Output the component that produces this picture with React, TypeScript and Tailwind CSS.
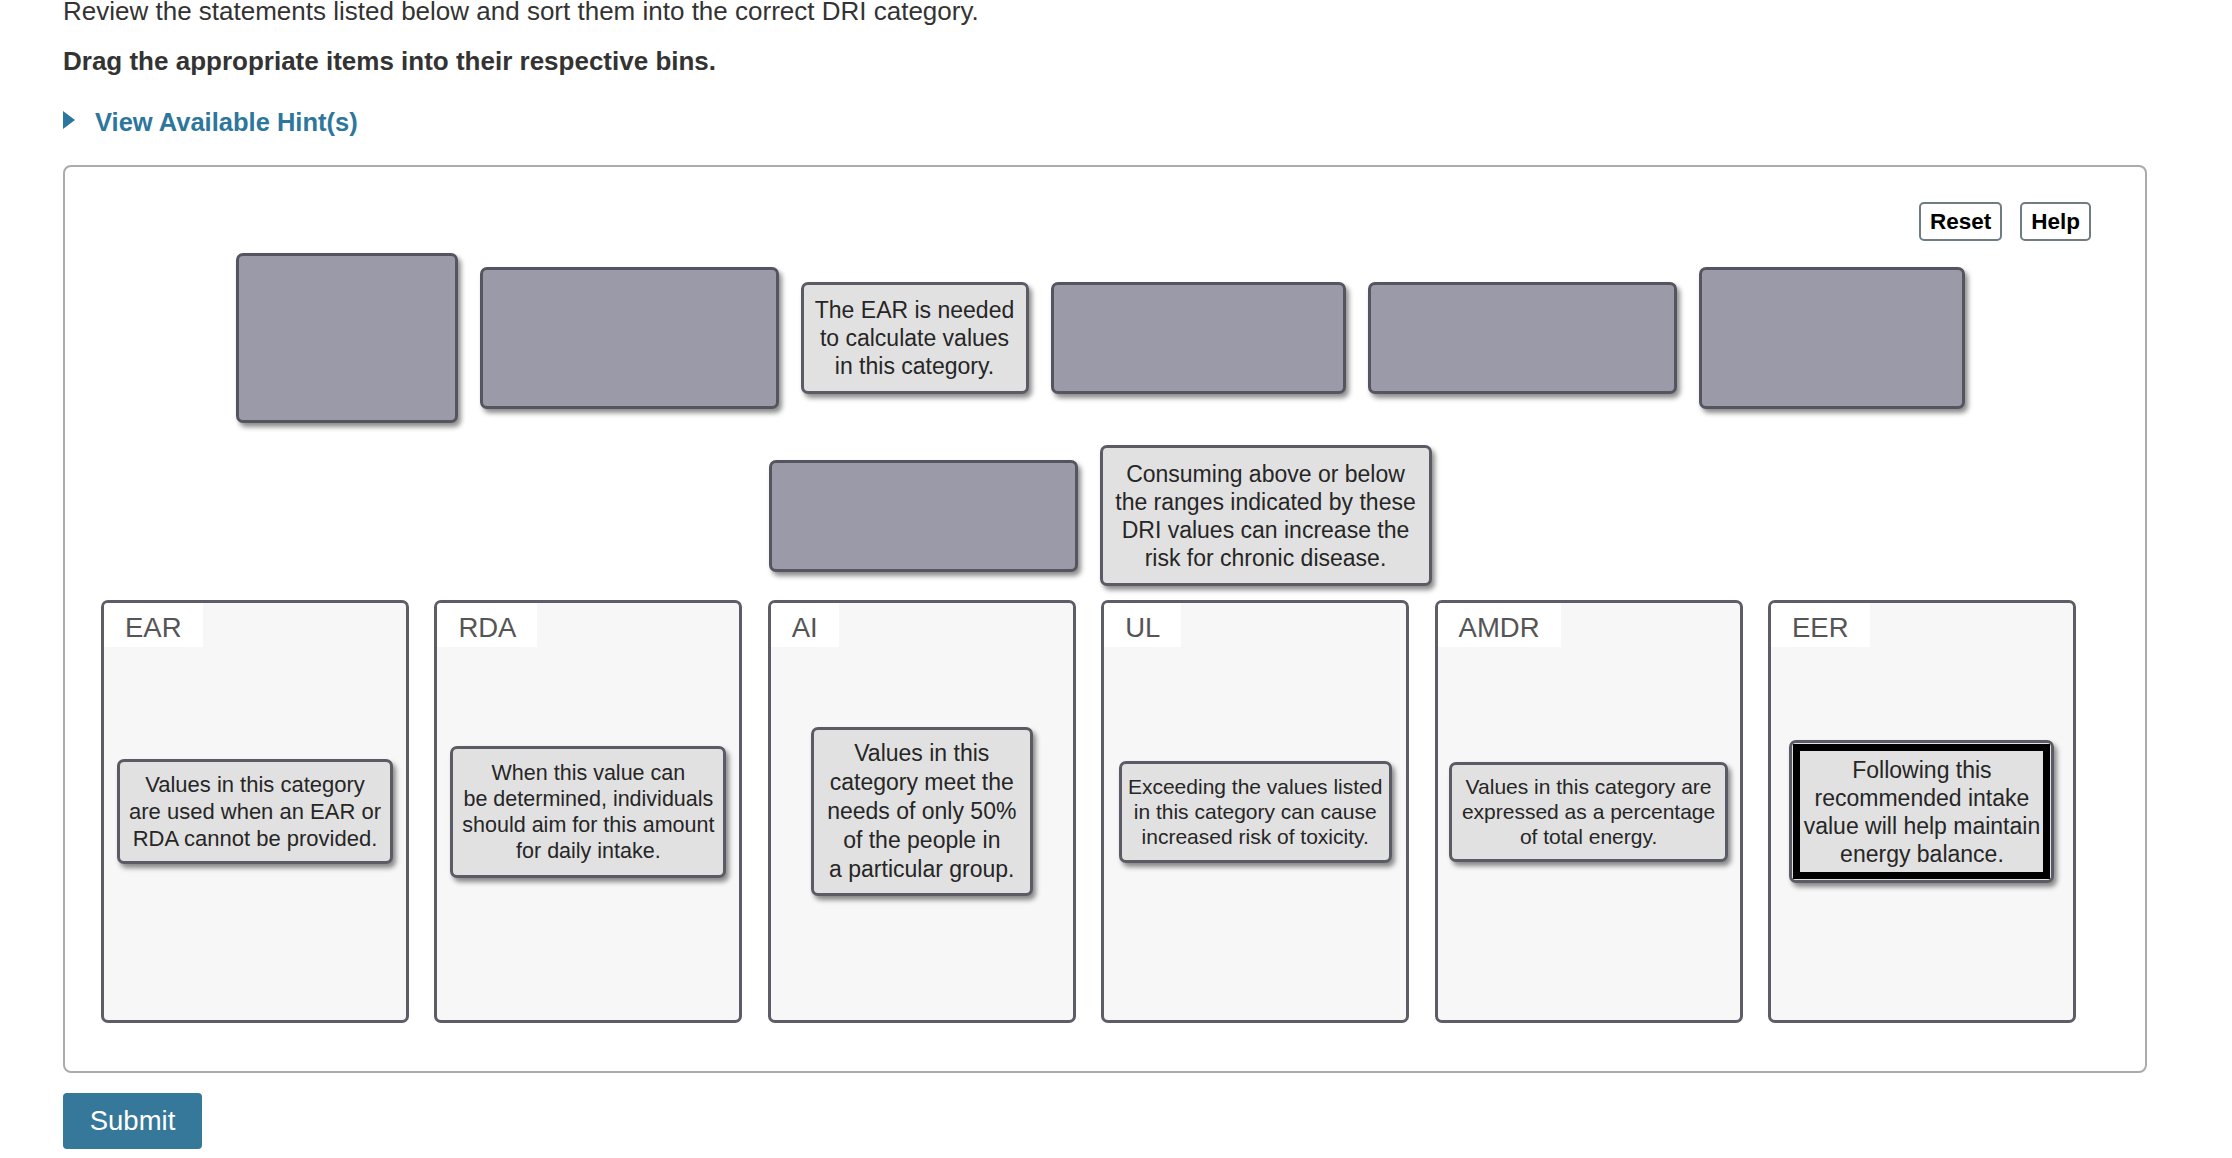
import type { ReactNode } from 'react'

const FONT = 'font-["Liberation_Sans",Arial,Helvetica,sans-serif]'

function Slot({ w, h }: { w: number; h: number }) {
  return (
    <div
      className="shrink-0 rounded-[7px] border-[3px] border-[#55555f] bg-[#9b9aa9] shadow-[3px_4px_5px_rgba(0,0,0,0.45)]"
      style={{ width: w, height: h }}
    />
  )
}

function Card({
  w,
  h,
  size,
  lead,
  lines,
  selected,
}: {
  w: number
  h: number
  size: number
  lead: number
  lines: ReactNode[]
  selected?: boolean
}) {
  const text = (
    <p className="text-center text-[#262626]" style={{ fontSize: size, lineHeight: `${lead}px` }}>
      {lines.map((l, i) => (
        <span key={i} className="block whitespace-nowrap">
          {l}
        </span>
      ))}
    </p>
  )
  return (
    <div
      className="flex shrink-0 items-center justify-center rounded-[7px] border-[3px] border-[#5b5b66] bg-[#e1e1e1] shadow-[3px_4px_5px_rgba(0,0,0,0.45)]"
      style={{ width: w, height: h }}
    >
      {selected ? (
        <div className="m-[1px] flex h-[calc(100%-2px)] w-[calc(100%-2px)] items-center justify-center border-[7px] border-black">
          {text}
        </div>
      ) : (
        text
      )}
    </div>
  )
}

function Bin({ label, children }: { label: string; children: ReactNode }) {
  return (
    <div className="relative flex h-[423px] w-[308px] shrink-0 items-center justify-center rounded-[7px] border-[3px] border-[#5d5d68] bg-[#f7f7f7]">
      <div className="absolute left-0 top-0 h-[44px] rounded-tl-[4px] bg-white px-[21px] text-[27.5px] leading-[49px] text-[#555]">
        {label}
      </div>
      {children}
    </div>
  )
}

export default function App() {
  return (
    <div className={`${FONT} min-h-screen bg-white pl-[63px] text-[#333]`}>
      <p className="mt-[-4px] text-[26px] leading-[30px]">
        Review the statements listed below and sort them into the correct DRI category.
      </p>
      <p className="mt-[20px] text-[26px] font-bold leading-[30px]">
        Drag the appropriate items into their respective bins.
      </p>
      <div className="mt-[31px] flex items-center gap-[20px] text-[#2d769c]">
        <svg width="12" height="18" viewBox="0 0 12 18" className="mt-[-5px]">
          <path d="M0 0 L12 9 L0 18 Z" fill="currentColor" />
        </svg>
        <span className="text-[25.5px] font-bold leading-[30px]">View Available Hint(s)</span>
      </div>

      <div className="mt-[28px] h-[908px] w-[2084px] rounded-[8px] border-2 border-[#ababab] pl-[36px] pr-[46px] pt-[35px]">
        <div className="flex justify-end gap-[18px] pr-[8px]">
          <button className="h-[39px] rounded-[5px] border-2 border-[#6f7d82] bg-white px-[9px] text-[22.5px] font-bold text-black">
            Reset
          </button>
          <button className="h-[39px] rounded-[5px] border-2 border-[#6f7d82] bg-white px-[9px] text-[22.5px] font-bold text-black">
            Help
          </button>
        </div>

        <div className="mt-[12px] flex h-[334px] flex-col gap-[22px]">
          <div className="flex items-center justify-center gap-[22px]">
            <Slot w={222} h={170} />
            <Slot w={299} h={142} />
            <Card
              w={228}
              h={112}
              size={23}
              lead={28}
              lines={['The EAR is needed', 'to calculate values', 'in this category.']}
            />
            <Slot w={295} h={112} />
            <Slot w={309} h={112} />
            <Slot w={266} h={142} />
          </div>
          <div className="flex items-center justify-center gap-[22px]">
            <Slot w={309} h={112} />
            <Card
              w={332}
              h={141}
              size={23}
              lead={28}
              lines={[
                'Consuming above or below',
                'the ranges indicated by these',
                'DRI values can increase the',
                'risk for chronic disease.',
              ]}
            />
          </div>
        </div>

        <div className="mt-[13px] flex gap-[25.4px]">
          <Bin label="EAR">
            <Card
              w={276}
              h={105}
              size={22}
              lead={27}
              lines={['Values in this category', 'are used when an EAR or', 'RDA cannot be provided.']}
            />
          </Bin>
          <Bin label="RDA">
            <Card
              w={276}
              h={132}
              size={21.5}
              lead={26}
              lines={[
                'When this value can',
                'be determined, individuals',
                'should aim for this amount',
                'for daily intake.',
              ]}
            />
          </Bin>
          <Bin label="AI">
            <Card
              w={222}
              h={169}
              size={23}
              lead={29}
              lines={[
                'Values in this',
                'category meet the',
                'needs of only 50%',
                'of the people in',
                'a particular group.',
              ]}
            />
          </Bin>
          <Bin label="UL">
            <Card
              w={273}
              h={102}
              size={21}
              lead={25}
              lines={[
                'Exceeding the values listed',
                'in this category can cause',
                'increased risk of toxicity.',
              ]}
            />
          </Bin>
          <Bin label="AMDR">
            <Card
              w={279}
              h={100}
              size={21}
              lead={25}
              lines={[
                'Values in this category are',
                'expressed as a percentage',
                'of total energy.',
              ]}
            />
          </Bin>
          <Bin label="EER">
            <Card
              w={265}
              h={143}
              size={23}
              lead={28}
              selected
              lines={[
                'Following this',
                'recommended intake',
                'value will help maintain',
                'energy balance.',
              ]}
            />
          </Bin>
        </div>
      </div>

      <button className="mt-[20px] h-[56px] w-[139px] rounded-[4px] bg-[#36789a] text-[27.5px] leading-[56px] text-white">
        Submit
      </button>
    </div>
  )
}
